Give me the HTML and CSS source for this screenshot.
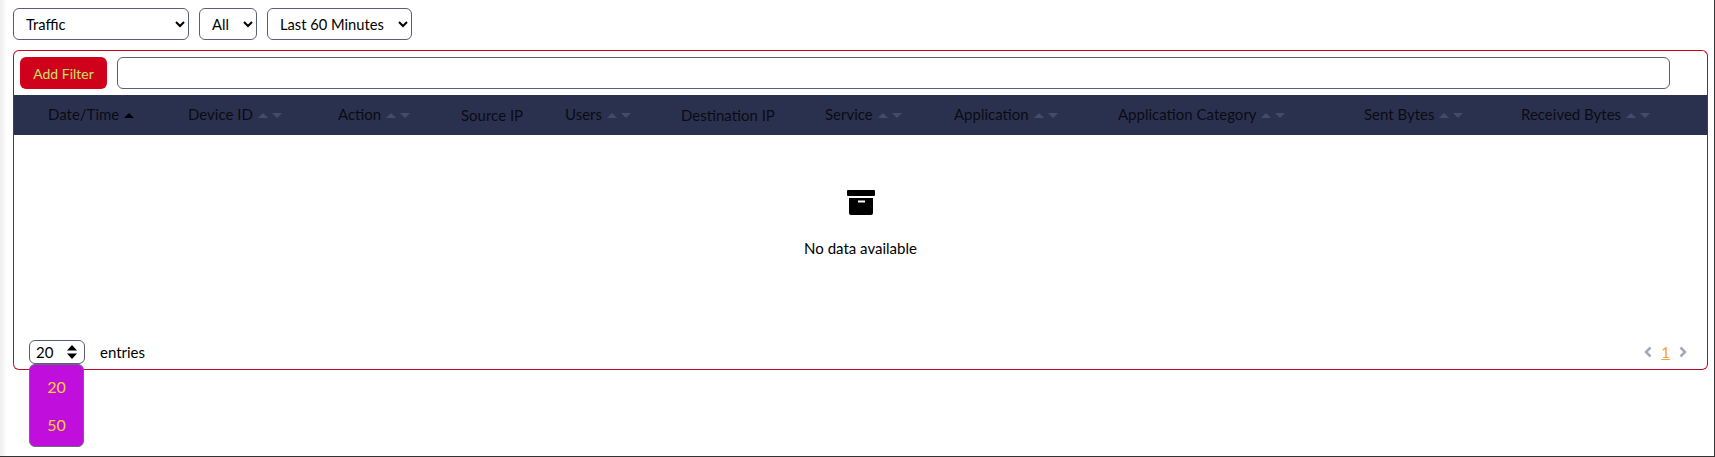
FILE: index.html
```html
<!DOCTYPE html>
<html>

<head>
    <meta charset="UTF-8">
    <title>Logs</title>
    <link rel="stylesheet" href="styles.css">
</head>

<body>
    <div class="page">
        <div class="toolbar">
            <select class="picker picker-type">
                <option>Traffic</option>
            </select>
            <select class="picker picker-scope">
                <option>All</option>
            </select>
            <select class="picker picker-range">
                <option>Last 60 Minutes</option>
            </select>
        </div>

        <div class="panel">
            <div class="filter-row">
                <button class="add-filter">Add Filter</button>
                <input class="filter-input" type="text">
            </div>

            <table class="log-table">
                <colgroup>
                    <col class="col-date">
                    <col class="col-device">
                    <col class="col-action">
                    <col class="col-source">
                    <col class="col-users">
                    <col class="col-dest">
                    <col class="col-service">
                    <col class="col-app">
                    <col class="col-category">
                    <col class="col-sent">
                    <col class="col-received">
                </colgroup>
                <thead>
                    <tr>
                        <th>Date/Time <span class="sort"><i class="up active"></i></span></th>
                        <th>Device ID <span class="sort"><i class="up"></i><i class="down"></i></span></th>
                        <th>Action <span class="sort"><i class="up"></i><i class="down"></i></span></th>
                        <th class="plain">Source IP</th>
                        <th>Users <span class="sort"><i class="up"></i><i class="down"></i></span></th>
                        <th class="plain">Destination IP</th>
                        <th>Service <span class="sort"><i class="up"></i><i class="down"></i></span></th>
                        <th>Application <span class="sort"><i class="up"></i><i class="down"></i></span></th>
                        <th>Application Category <span class="sort"><i class="up"></i><i class="down"></i></span></th>
                        <th>Sent Bytes <span class="sort"><i class="up"></i><i class="down"></i></span></th>
                        <th>Received Bytes <span class="sort"><i class="up"></i><i class="down"></i></span></th>
                    </tr>
                </thead>
            </table>

            <div class="empty">
                <svg class="empty-icon" viewBox="0 0 28 25" width="28" height="25">
                    <path d="M1 0h26a1 1 0 0 1 1 1v4a1 1 0 0 1-1 1H1a1 1 0 0 1-1-1V1a1 1 0 0 1 1-1z" />
                    <path fill-rule="evenodd" d="M2 8h24v15a2 2 0 0 1-2 2H4a2 2 0 0 1-2-2zM11 10.500v2h7v-2z" />
                </svg>
                <div class="empty-text">No data available</div>
            </div>

            <div class="table-footer">
                <div class="length">
                    <div class="length-select">
                        <span>20</span>
                        <svg viewBox="0 0 10 14" width="10" height="14">
                            <path d="M5 0l5 5.500H0z" />
                            <path d="M5 14l5-5.500H0z" />
                        </svg>
                        <div class="length-menu">
                            <div class="length-item">20</div>
                            <div class="length-item">50</div>
                        </div>
                    </div>
                    <span class="length-label">entries</span>
                </div>
                <div class="pager">
                    <svg viewBox="0 0 8 12" width="8" height="12">
                        <path d="M6.500 1.500L2 6l4.500 4.500" />
                    </svg>
                    <a class="page-link">1</a>
                    <svg viewBox="0 0 8 12" width="8" height="12">
                        <path d="M1.500 1.500L6 6l-4.500 4.500" />
                    </svg>
                </div>
            </div>
        </div>
    </div>
</body>

</html>
```

FILE: styles.css
```css
* {
    box-sizing: border-box;
}

html,
body {
    height: 100%;
}

body {
    margin: 0;
    font-family: Lato, 'Open Sans', sans-serif;
    font-size: 14px;
    color: #000;
    background: #fff;
}

.page {
    height: 100%;
    padding: 8px 6px 0 13px;
    border-right: 1px solid #333;
    border-bottom: 1px solid #333;
    background: linear-gradient(to right, #eee, #fff 7px);
}

.toolbar {
    display: flex;
    gap: 10px;
    height: 32px;
    margin-bottom: 10px;
}

.picker {
    height: 32px;
    padding: 0 4px 0 8px;
    font-family: inherit;
    font-size: 14.7px;
    color: #000;
    background: #fff;
    border: 1px solid #5a5f78;
    border-radius: 6px;
}

.picker-type {
    width: 176px;
}

.picker-scope {
    width: 58px;
}

.picker-range {
    width: 145px;
}

.panel {
    height: 320px;
    background: #fff;
    border: 1px solid #d0021b;
    border-bottom-color: #b8102a;
    border-radius: 6px;
}

.filter-row {
    display: flex;
    gap: 10px;
    height: 44px;
    padding: 6px 0 0 6px;
}

.add-filter {
    width: 87px;
    height: 32px;
    padding: 0;
    font-family: inherit;
    font-size: 14px;
    color: #c8e06c;
    background: #d0021b;
    border: none;
    border-radius: 6px;
}

.filter-input {
    width: 1553px;
    height: 32px;
    border: 1px solid #5a5f78;
    border-radius: 6px;
    background: #fff;
}

.log-table {
    width: 100%;
    table-layout: fixed;
    border-collapse: collapse;
}

.col-date {
    width: 140px;
}

.col-device {
    width: 150px;
}

.col-action {
    width: 123px;
}

.col-source {
    width: 104px;
}

.col-users {
    width: 116px;
}

.col-dest {
    width: 144px;
}

.col-service {
    width: 129px;
}

.col-app {
    width: 164px;
}

.col-category {
    width: 246px;
}

.col-sent {
    width: 157px;
}

th {
    height: 40px;
    padding: 0 0 2px 34px;
    font-size: 15px;
    font-weight: 400;
    text-align: left;
    white-space: nowrap;
    color: #0a0b12;
    background: #2a314f;
}

th.plain {
    padding-bottom: 0;
}

/* Sort carets next to the header label */
.sort {
    display: inline-flex;
    gap: 4px;
    margin-left: 1px;
    vertical-align: 2px;
}

.sort i {
    display: block;
    border-left: 5px solid transparent;
    border-right: 5px solid transparent;
}

.sort .up {
    border-bottom: 5px solid #454a66;
}

.sort .down {
    border-top: 5px solid #454a66;
}

.sort .active {
    border-bottom-color: #000;
}

.empty {
    display: flex;
    flex-direction: column;
    align-items: center;
    height: 205px;
    padding-top: 55px;
}

.empty-icon {
    display: block;
    fill: #000;
}

.empty-text {
    margin-top: 24px;
    font-size: 15px;
}

.table-footer {
    display: flex;
    justify-content: space-between;
    align-items: center;
    padding: 0 20px 0 15px;
}

.length {
    display: flex;
    align-items: center;
    gap: 15px;
}

.length-select {
    position: relative;
    display: flex;
    justify-content: space-between;
    align-items: center;
    width: 56px;
    height: 24px;
    padding: 0 7px 0 6px;
    font-size: 15px;
    background: #fff;
    border: 1px solid #5a5f78;
    border-radius: 6px;
}

.length-select svg {
    fill: #000;
}

/* Open list, hangs over the bottom of the panel */
.length-menu {
    position: absolute;
    top: 23px;
    left: -1px;
    width: 55px;
    height: 83px;
    padding-top: 3px;
    color: #ffd02a;
    background: #c00fdc;
    border: 1px solid #6b6b80;
    border-radius: 6px;
}

.length-item {
    height: 38px;
    line-height: 38px;
    font-size: 16px;
    text-align: center;
}

.length-label {
    font-size: 15px;
}

.pager {
    display: flex;
    align-items: center;
    gap: 9px;
}

.pager svg {
    fill: none;
    stroke: #a3a9bb;
    stroke-width: 2.5;
}

.page-link {
    font-size: 15px;
    color: #f5a623;
    text-decoration: underline;
}
```
